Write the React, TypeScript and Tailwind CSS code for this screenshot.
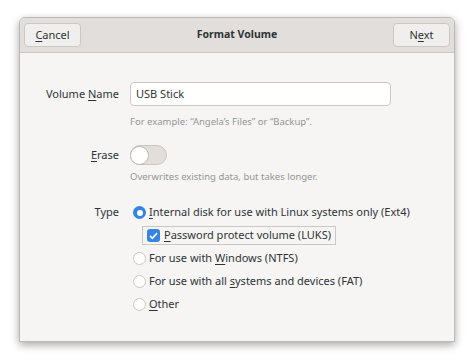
import React from "react"

function U({ children }: { children: React.ReactNode }) {
  return <span className="underline underline-offset-2">{children}</span>
}

function Radio({ checked }: { checked?: boolean }) {
  return checked ? (
    <span className="w-[13px] h-[13px] rounded-full bg-[#3584e4] flex items-center justify-center shrink-0">
      <span className="w-[6px] h-[6px] rounded-full bg-white" />
    </span>
  ) : (
    <span className="w-[13px] h-[13px] rounded-full border border-[#cdc7c2] bg-white shrink-0" />
  )
}

export default function App() {
  const font = { fontFamily: '"Noto Sans", "Open Sans", sans-serif' }

  return (
    <div className="w-[474px] h-[363px] bg-white pt-[17px] pl-[19px]" style={font}>
      <div className="w-[436px] h-[325px] flex flex-col rounded-t-[6px] border border-[#bdb8b3] bg-[#f6f5f4] shadow-[0_3px_9px_rgba(0,0,0,0.35)] overflow-hidden text-[11px] text-[#2e3436]">
        {/* header bar */}
        <div className="h-[35px] flex items-center justify-between px-[4px] bg-[#e1dedb] border-b border-[#cdc7c2]">
          <button className="w-[57px] h-[24px] rounded-[4px] border border-[#cdc7c2] bg-[#f0efed] text-[11px]">
            <U>C</U>ancel
          </button>
          <span className="font-bold text-[10.5px]">Format Volume</span>
          <button className="w-[57px] h-[24px] rounded-[4px] border border-[#cdc7c2] bg-[#f0efed] text-[11px]">
            N<U>e</U>xt
          </button>
        </div>

        {/* body */}
        <div className="grid grid-cols-[99px_minmax(0,1fr)] gap-x-[11px] pt-[29px] pr-[63px] whitespace-nowrap">
          <div className="h-[24px] flex items-center justify-end">
            <span>Volume <U>N</U>ame</span>
          </div>
          <div>
            <div className="h-[24px] flex items-center rounded-[4px] border border-[#cdc7c2] bg-white px-[5px]">
              USB Stick
            </div>
            <div className="text-[9.5px] text-[#929595] mt-[9px]">For example: “Angela’s Files” or “Backup”.</div>
          </div>

          <div className="h-[20px] mt-[16px] flex items-center justify-end">
            <span><U>E</U>rase</span>
          </div>
          <div className="mt-[16px]">
            <div className="w-[37px] h-[20px] rounded-full bg-[#e1dedb] border border-[#cdc7c2] flex items-center">
              <span className="w-[19px] h-[19px] rounded-full bg-white border border-[#bfb8b1] -ml-px" />
            </div>
            <div className="text-[9.5px] text-[#929595] mt-[5px]">Overwrites existing data, but takes longer.</div>
          </div>

          <div className="h-[20px] mt-[18px] flex items-center justify-end">Type</div>
          <div className="mt-[18px] flex flex-col items-start">
            <div className="h-[20px] flex items-center gap-[3px] ml-[3px]">
              <Radio checked />
              <span><U>I</U>nternal disk for use with Linux systems only (Ext4)</span>
            </div>
            <div className="h-[19px] mt-[3px] ml-[12px] flex items-center gap-[4px] border border-[#cdc7c2] px-[4px]">
              <span className="w-[13px] h-[13px] rounded-[3px] bg-[#3584e4] flex items-center justify-center">
                <svg viewBox="0 0 14 14" className="w-[11px] h-[11px]" fill="none" stroke="white" strokeWidth="2">
                  <path d="M2.5 7.5l3 3 6-6.5" />
                </svg>
              </span>
              <span><U>P</U>assword protect volume (LUKS)</span>
            </div>
            <div className="h-[20px] mt-[4px] flex items-center gap-[3px] ml-[3px]">
              <Radio />
              <span>For use with <U>W</U>indows (NTFS)</span>
            </div>
            <div className="h-[20px] mt-[3px] flex items-center gap-[3px] ml-[3px]">
              <Radio />
              <span>For use with all <U>s</U>ystems and devices (FAT)</span>
            </div>
            <div className="h-[20px] mt-[3px] flex items-center gap-[3px] ml-[3px]">
              <Radio />
              <span><U>O</U>ther</span>
            </div>
          </div>
        </div>
      </div>
    </div>
  )
}
